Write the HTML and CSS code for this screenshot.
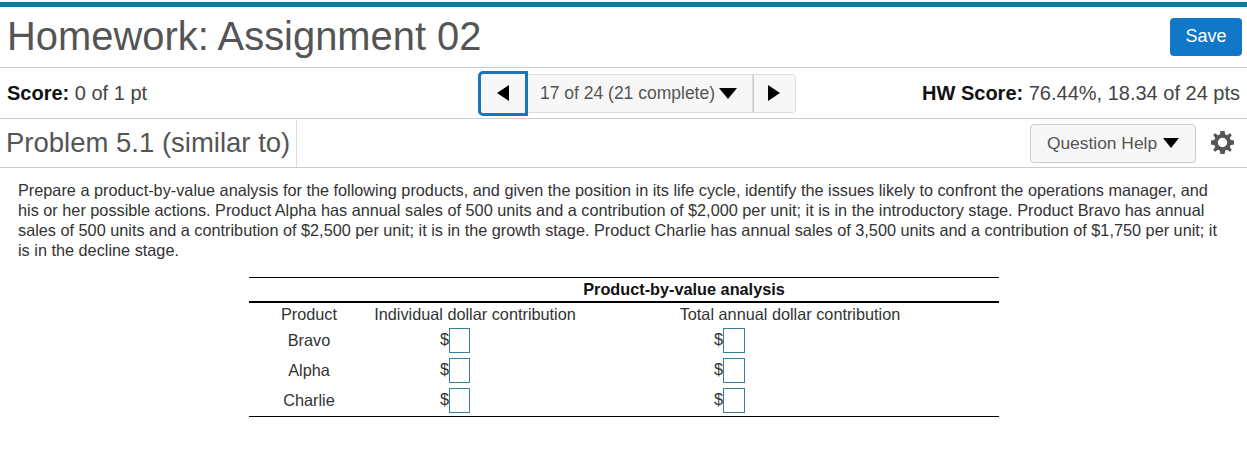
FILE: index.html
```html
<!DOCTYPE html>
<html lang="en">
<head>
  <meta charset="UTF-8" />
  <title>Homework: Assignment 02</title>
  <link rel="stylesheet" href="styles.css">
</head>
<body>
  <header class="title-bar">
    <h1>Homework: Assignment 02</h1>
    <button class="save-btn">Save</button>
  </header>

  <div class="score-bar">
    <div class="score"><b>Score:</b> 0 of 1 pt</div>
    <div class="pager">
      <button class="pager-prev"><span class="arrow-left"></span></button>
      <button class="pager-mid">17 of 24 (21 complete)<span class="caret"></span></button>
      <button class="pager-next"><span class="arrow-right"></span></button>
    </div>
    <div class="hw-score"><b>HW Score:</b> 76.44%, 18.34 of 24 pts</div>
  </div>

  <div class="problem-bar">
    <h2>Problem 5.1 (similar to)</h2>
    <button class="help-btn">Question Help<span class="caret"></span></button>
    <svg class="gear" viewBox="0 0 24 24" width="25" height="25">
      <path fill="#555" fill-rule="evenodd" d="M10 1H14L14.6 4.300L16.400 5L19.100 3.100L20.900 4.900L19 7.600L19.700 9.400L23 10V14L19.700 14.600L19 16.400L20.900 19.100L19.100 20.900L16.400 19L14.600 19.700L14 23H10L9.400 19.700L7.600 19L4.900 20.900L3.100 19.100L5 16.400L4.300 14.600L1 14V10L4.300 9.400L5 7.600L3.100 4.900L4.900 3.100L7.600 5L9.400 4.300ZM12 7.500a4.500 4.500 0 1 0 0 9 4.500 4.500 0 0 0 0-9z"/>
    </svg>
  </div>

  <main class="question">
    <p>Prepare a product-by-value analysis for the following products, and given the position in its life cycle, identify the issues likely to confront the operations manager, and his or her possible actions. Product Alpha has annual sales of 500 units and a contribution of $2,000 per unit; it is in the introductory stage. Product Bravo has annual sales of 500 units and a contribution of $2,500 per unit; it is in the growth stage. Product Charlie has annual sales of 3,500 units and a contribution of $1,750 per unit; it is in the decline stage.</p>

    <table class="value-table">
      <colgroup>
        <col class="col-product">
        <col class="col-unit">
        <col class="col-total">
      </colgroup>
      <thead>
        <tr class="caption-row"><th></th><th colspan="2">Product-by-value analysis</th></tr>
        <tr class="head-row">
          <th>Product</th>
          <th>Individual dollar contribution</th>
          <th>Total annual dollar contribution</th>
        </tr>
      </thead>
      <tbody>
        <tr>
          <td>Bravo</td>
          <td class="money money-unit">$<span class="box"></span></td>
          <td class="money money-total">$<span class="box"></span></td>
        </tr>
        <tr>
          <td>Alpha</td>
          <td class="money money-unit">$<span class="box"></span></td>
          <td class="money money-total">$<span class="box"></span></td>
        </tr>
        <tr>
          <td>Charlie</td>
          <td class="money money-unit">$<span class="box"></span></td>
          <td class="money money-total">$<span class="box"></span></td>
        </tr>
      </tbody>
    </table>
  </main>
</body>
</html>
```

FILE: styles.css
```css
* {
  box-sizing: border-box;
}
body {
  margin: 0;
  padding-top: 2px;
  font-family: "Liberation Sans", Arial, sans-serif;
  background: #fff;
  color: #333;
}
button {
  font-family: inherit;
  cursor: pointer;
}
.title-bar {
  display: flex;
  justify-content: space-between;
  align-items: center;
  height: 66px;
  border-top: 5px solid #0b7a9b;
  border-bottom: 1px solid #ccc;
  padding: 0 5px 0 7px;
}
h1 {
  margin: 0 0 2px;
  font-size: 39.9px;
  font-weight: normal;
  color: #555;
}
.save-btn {
  width: 72px;
  height: 38px;
  padding: 0 0 2px;
  background: #1177c9;
  color: #fff;
  border: none;
  border-radius: 4px;
  font-size: 18px;
}
.score-bar {
  display: grid;
  grid-template-columns: 1fr auto 1fr;
  align-items: center;
  height: 51px;
  border-bottom: 1px solid #ccc;
  padding: 0 7px;
  font-size: 20px;
  color: #444;
}
.score-bar b {
  color: #111;
}
.hw-score {
  text-align: right;
}
.pager {
  display: flex;
  align-items: center;
  height: 39px;
  margin-left: 26px;
}
.pager button {
  height: 39px;
  background: #f7f7f7;
  border: 1px solid #ddd;
  display: flex;
  align-items: center;
  justify-content: center;
  padding: 0;
}
.pager .pager-prev {
  width: 50px;
  height: 45px;
  background: #f7f7f7;
  border: 3px solid #1b75bb;
  border-radius: 5px 0 0 5px;
}
.pager .pager-mid {
  width: 225px;
  padding-right: 2px;
  border-left: none;
  font-size: 17.5px;
  color: #555;
}
.pager .pager-next {
  width: 43px;
  border-left: 1px solid #ccc;
  border-radius: 0 4px 4px 0;
}
.arrow-left {
  border-top: 8.5px solid transparent;
  border-bottom: 8.5px solid transparent;
  border-right: 12px solid #000;
}
.arrow-right {
  border-top: 8.5px solid transparent;
  border-bottom: 8.5px solid transparent;
  border-left: 12px solid #000;
}
.caret {
  display: inline-block;
  margin-left: 4px;
  border-left: 9px solid transparent;
  border-right: 9px solid transparent;
  border-top: 11px solid #000;
}
.problem-bar {
  display: flex;
  align-items: center;
  height: 49px;
  border-bottom: 1px solid #ccc;
  padding-left: 6px;
}
h2 {
  margin: 0 auto 0 0;
  height: 47px;
  line-height: 45px;
  padding-right: 6px;
  border-right: 1px solid #ddd;
  font-size: 27.5px;
  font-weight: normal;
  color: #555;
}
.help-btn {
  display: flex;
  align-items: center;
  justify-content: center;
  width: 166px;
  height: 39px;
  background: #f7f7f7;
  border: 1px solid #ccc;
  border-radius: 4px;
  font-size: 17.4px;
  color: #555;
}
.help-btn .caret {
  margin-left: 6px;
  border-left-width: 8px;
  border-right-width: 8px;
  border-top-width: 10px;
}
.gear {
  margin: 0 12px 2px 14px;
}
.question {
  padding: 12px 18px 0;
  font-size: 16.27px;
  color: #333;
}
.question p {
  margin: 0;
  line-height: 20px;
}
.value-table {
  width: 750px;
  margin: 17px 0 0 231px;
  border-collapse: collapse;
  border-top: 1px solid #000;
  border-bottom: 1px solid #000;
  table-layout: fixed;
}
.value-table th,
.value-table td {
  padding: 0;
  font-weight: normal;
  text-align: center;
}
.caption-row th {
  height: 24px;
  font-weight: bold;
  color: #111;
  border-bottom: 2px solid #000;
}
.value-table .head-row th {
  height: 24px;
}
.value-table td {
  height: 30px;
}
.value-table tr:last-child td {
  height: 31px;
  padding-bottom: 1px;
}
.col-product {
  width: 120px;
}
.col-unit {
  width: 212px;
}
.value-table .money-unit {
  padding-right: 40px;
}
.value-table .money-total {
  padding-right: 121px;
}
.box {
  display: inline-block;
  width: 21px;
  height: 25px;
  vertical-align: middle;
  border: 1px solid #3b7f95;
  background: #fff;
}
.money-total .box {
  width: 22px;
}
```
